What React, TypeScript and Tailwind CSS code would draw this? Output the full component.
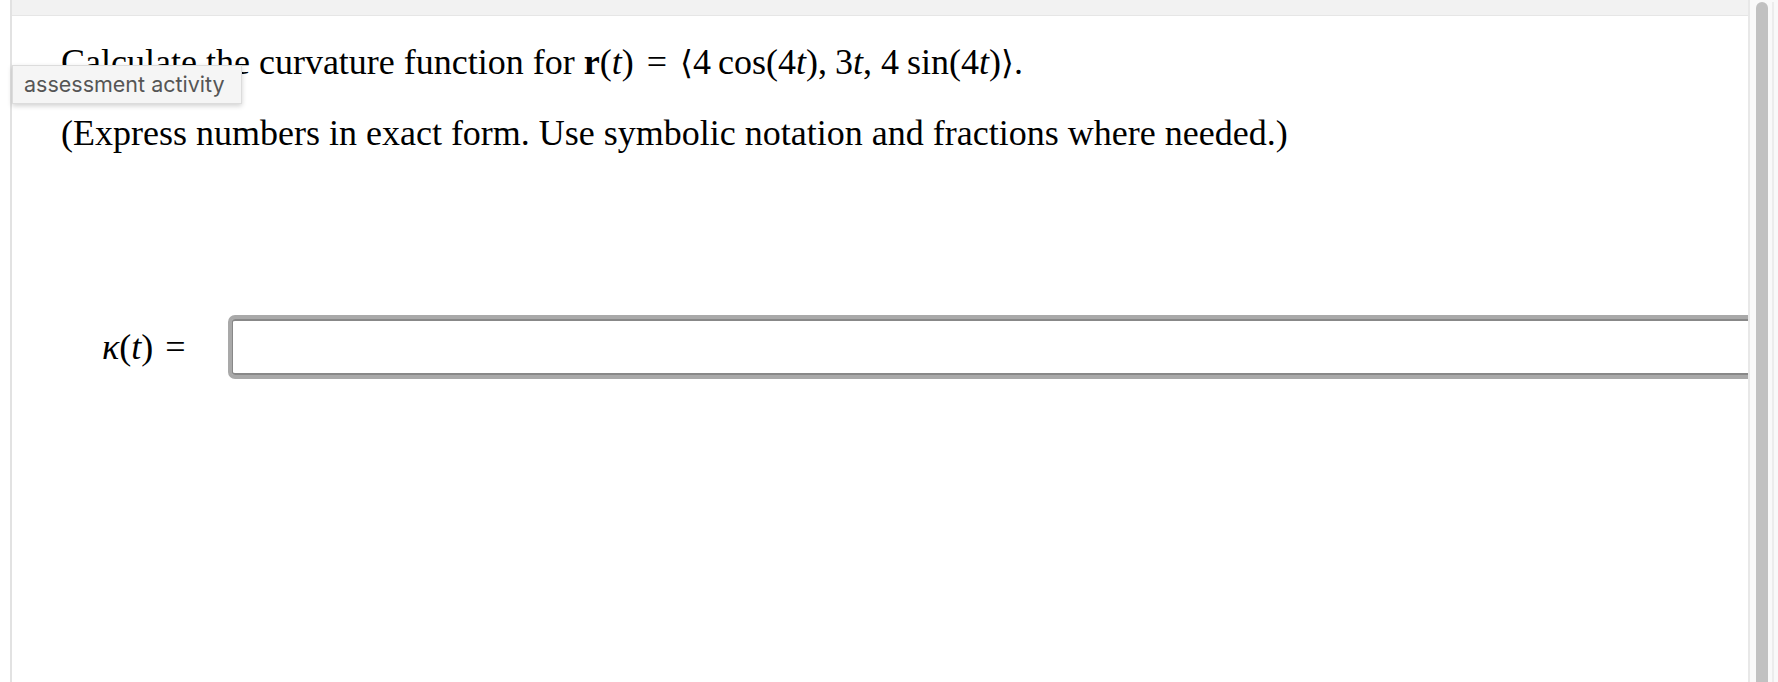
const serif = { fontFamily: '"Liberation Serif", "Times New Roman", "DejaVu Serif", serif' };

const Tooltip = () => (
  <div
    className="absolute left-[12px] top-[65px] z-20 flex h-[39px] w-[230px] items-center border border-[#dcdcdc] bg-[#f5f5f5] pl-[11px] text-[21.5px] text-[#555] shadow-[0_2px_5px_rgba(0,0,0,0.18)]"
    style={{ fontFamily: 'Inter, "Liberation Sans", Arial, sans-serif' }}
  >
    assessment activity
  </div>
);

const Scrollbar = () => (
  <div className="flex h-full w-[30px] shrink-0 border-l-2 border-[#e8e8e8] bg-[#f9f9f9] pt-[2px] pl-[6px] pr-[4px]">
    <div className="h-[720px] w-[16px] rounded-full bg-[#c1c1c1]" />
    <div className="ml-[4px] h-full w-[2px] bg-[#ececec]" />
  </div>
);

export default function App() {
  return (
    <div className="relative flex h-[682px] w-full overflow-hidden bg-white text-black" style={serif}>
      <Tooltip />

      {/* left gutter */}
      <div className="w-[10px] shrink-0 bg-white" />

      <main className="flex min-w-0 flex-1 flex-col overflow-hidden border-l-2 border-[#e2e2e2]">
        <div className="h-[16px] shrink-0 border-b border-[#e6e6e6] bg-[#f2f2f2]" />

        <div className="pl-[49px] pt-[19px] text-[36px] leading-normal">
          <p>
            Calculate the curvature function for{" "}
            <span className="whitespace-nowrap">
              <b>r</b>(<i>t</i>)<span className="mx-[13px]">=</span>
              <span style={{ fontFamily: '"DejaVu Serif", serif' }} className="text-[33px]">⟨</span>4<span className="ml-[7px]">cos</span>(4<i>t</i>),<span className="ml-[8px]">3</span><i>t</i>,<span className="ml-[9px]">4</span><span className="ml-[8px]">sin</span>(4<i>t</i>)
              <span style={{ fontFamily: '"DejaVu Serif", serif' }} className="text-[33px]">⟩</span>
            </span>
            .
          </p>

          <p className="mt-[17px]">
            (Express numbers in exact form. Use symbolic notation and fractions where needed.)
          </p>

          <div className="mt-[155px] flex items-center">
            <div className="ml-[41px] w-[126px] shrink-0 whitespace-nowrap">
              <i>κ</i>(<i>t</i>)<span className="ml-[12px]">=</span>
            </div>
            <input
              type="text"
              aria-label="curvature"
              className="h-[64px] w-[1600px] shrink-0 rounded-[7px] border-[4px] border-[#a9a9a9] bg-white shadow-[inset_0_2px_0_#888,inset_0_-2px_0_#888,inset_1px_0_0_#888] outline-none"
            />
          </div>
        </div>
      </main>

      <Scrollbar />
    </div>
  );
}
